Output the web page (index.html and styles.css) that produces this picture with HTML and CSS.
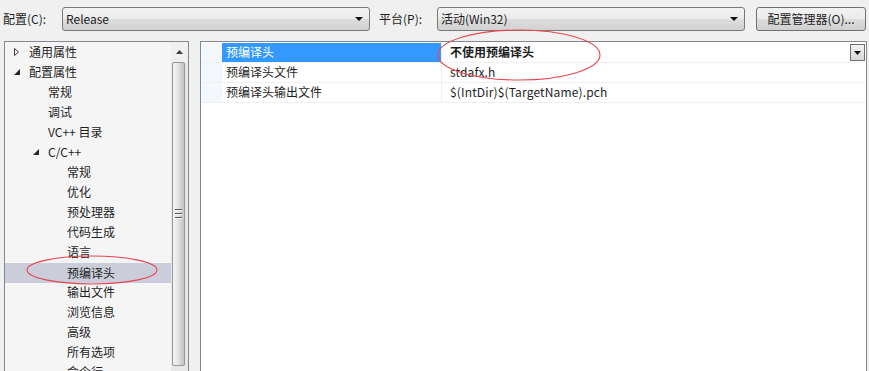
FILE: index.html
```html
<!DOCTYPE html>
<html lang="zh">
<head>
<meta charset="utf-8">
<title>属性页</title>
<link rel="stylesheet" href="styles.css">
</head>
<body>
<div class="page">
  <div class="topbar">
    <span class="label label-cfg">配置(C):</span>
    <div class="combo"><span class="combo-text">Release</span><span class="combo-arrow"></span></div>
    <span class="label label-plat">平台(P):</span>
    <div class="combo"><span class="combo-text">活动(Win32)</span><span class="combo-arrow"></span></div>
    <button class="btn">配置管理器(O)...</button>
  </div>
  <div class="main">
    <div class="tree">
      <div class="tree-list">
        <div class="node l1"><span class="exp"><svg width="19" height="20" viewBox="0 0 19 20"><path d="M4.5 6.5 L8.5 10 L4.5 13.5 Z" fill="none" stroke="#404040" stroke-width="1"/></svg></span>通用属性</div>
        <div class="node l1"><span class="exp"><svg width="19" height="20" viewBox="0 0 19 20"><path d="M10 7 L10 13 L4 13 Z" fill="#262626"/></svg></span>配置属性</div>
        <div class="node l2">常规</div>
        <div class="node l2">调试</div>
        <div class="node l2">VC++ 目录</div>
        <div class="node l2e"><span class="exp"><svg width="19" height="20" viewBox="0 0 19 20"><path d="M10 7 L10 13 L4 13 Z" fill="#262626"/></svg></span>C/C++</div>
        <div class="node l3">常规</div>
        <div class="node l3">优化</div>
        <div class="node l3">预处理器</div>
        <div class="node l3">代码生成</div>
        <div class="node l3">语言</div>
        <div class="node l3 sel">预编译头</div>
        <div class="node l3">输出文件</div>
        <div class="node l3">浏览信息</div>
        <div class="node l3">高级</div>
        <div class="node l3">所有选项</div>
        <div class="node l3">命令行</div>
      </div>
      <div class="vscroll">
        <div class="sb-up"><svg width="7" height="4" viewBox="0 0 7 4"><path d="M0 4 L3.5 0 L7 4 Z" fill="#3c3c3c"/></svg></div>
        <div class="sb-thumb"><span class="grip"></span><span class="grip"></span><span class="grip"></span></div>
      </div>
    </div>
    <div class="grid">
      <div class="row">
        <div class="gut"></div>
        <div class="name selname">预编译头</div>
        <div class="val bold">不使用预编译头<span class="dd"><svg width="7" height="4" viewBox="0 0 7 4"><path d="M0 0 L7 0 L3.5 4 Z" fill="#111"/></svg></span></div>
      </div>
      <div class="row">
        <div class="gut"></div>
        <div class="name">预编译头文件</div>
        <div class="val">stdafx.h</div>
      </div>
      <div class="row">
        <div class="gut"></div>
        <div class="name">预编译头输出文件</div>
        <div class="val">$(IntDir)$(TargetName).pch</div>
      </div>
    </div>
  </div>
  <svg class="marks" width="869" height="371" viewBox="0 0 869 371">
    <ellipse cx="519" cy="55" rx="81" ry="25" fill="none" stroke="#e8454f" stroke-width="1.1"/>
    <ellipse cx="92" cy="270" rx="65" ry="14" fill="none" stroke="#e8454f" stroke-width="1.1"/>
  </svg>
</div>
</body>
</html>
```
FILE: styles.css
```css
html, body {
  margin: 0;
  padding: 0;
}
body {
  background: #f0f0f0;
  font-family: "Noto Sans CJK SC", "Noto Sans", sans-serif;
  font-size: 12px;
  color: #1e1e1e;
  overflow: hidden;
}
.page {
  position: relative;
  width: 869px;
  height: 371px;
  overflow: hidden;
}
.topbar {
  display: flex;
  align-items: center;
  height: 41px;
  box-sizing: border-box;
  padding: 0 3px 3px 3px;
}
.label {
  line-height: 24px;
}
.label-cfg {
  width: 59px;
}
.label-plat {
  width: 58px;
  margin-left: 9px;
}
.combo {
  position: relative;
  width: 308px;
  height: 24px;
  box-sizing: border-box;
  border: 1px solid #7a7a7a;
  border-radius: 3px;
  background: linear-gradient(#f3f3f3 0%, #ebebeb 50%, #dddddd 51%, #d2d2d2 100%);
  display: flex;
  align-items: center;
}
.combo-text {
  padding-left: 3px;
  line-height: 22px;
}
.combo-arrow {
  position: absolute;
  right: 6px;
  top: 9px;
  width: 0;
  height: 0;
  border-left: 4px solid transparent;
  border-right: 4px solid transparent;
  border-top: 4px solid #111;
}
.btn {
  margin-left: 11px;
  width: 110px;
  height: 24px;
  box-sizing: border-box;
  border: 1px solid #707070;
  border-radius: 3px;
  background: linear-gradient(#f2f2f2 0%, #ebebeb 50%, #dddddd 51%, #cfcfcf 100%);
  font-family: inherit;
  font-size: 12px;
  color: #1e1e1e;
  padding: 0;
  line-height: 22px;
}
.main {
  display: flex;
  padding-left: 4px;
  gap: 11px;
  height: 330px;
}
.tree {
  width: 185px;
  height: 340px;
  box-sizing: border-box;
  border: 1px solid #828790;
  background: #f5f5f5;
  display: flex;
}
.tree-list {
  width: 166px;
  padding-top: 0;
}
.node {
  display: flex;
  align-items: center;
  height: 20px;
  line-height: 20px;
  white-space: nowrap;
}
.node.l1 { padding-left: 5px; }
.node.l2 { padding-left: 43px; }
.node.l2e { padding-left: 24px; }
.node.l3 { padding-left: 62px; }
.node.sel {
  background: #cbcdda;
  margin-top: 1px;
  margin-bottom: -1px;
}
.exp {
  width: 19px;
  height: 20px;
  display: flex;
}
.vscroll {
  width: 17px;
  display: flex;
  flex-direction: column;
  background: #e8e8e8;
}
.sb-up {
  height: 20px;
  display: flex;
  align-items: center;
  justify-content: center;
  background: #f0f0f0;
}
.sb-thumb {
  height: 304px;
  margin: 0 0 0 1px;
  width: 13px;
  box-sizing: border-box;
  border: 1px solid #979797;
  border-radius: 2px;
  background: linear-gradient(90deg, #f4f4f4 0%, #e6e6e6 45%, #d2d2d2 70%, #c4c4c4 100%);
  display: flex;
  flex-direction: column;
  align-items: center;
  justify-content: center;
  gap: 2px;
}
.grip {
  width: 7px;
  height: 1px;
  background: #555;
  border-bottom: 1px solid #fafafa;
}
.grid {
  width: 667px;
  height: 340px;
  box-sizing: border-box;
  border: 1px solid #828790;
  background: #ffffff;
  padding-top: 1px;
}
.row {
  display: flex;
  height: 20px;
  box-sizing: border-box;
  border-bottom: 1px solid #f0f0f0;
}
.gut {
  width: 21px;
  background: #f4f7fb;
}
.name {
  width: 219px;
  padding-left: 4px;
  box-sizing: border-box;
  line-height: 18px;
  white-space: nowrap;
}
.selname {
  background: #3399ff;
  color: #ffffff;
}
.val {
  position: relative;
  flex: 1;
  border-left: 1px solid #f0f0f0;
  padding-left: 8px;
  line-height: 18px;
  white-space: nowrap;
  letter-spacing: 0.15px;
}
.bold {
  font-weight: bold;
  letter-spacing: 0;
}
.dd {
  position: absolute;
  right: 1px;
  top: 1px;
  width: 15px;
  height: 17px;
  box-sizing: border-box;
  border: 1px solid #6e6e6e;
  background: linear-gradient(#f2f2f2, #d8d8d8);
  display: flex;
  align-items: center;
  justify-content: center;
}
.marks {
  position: absolute;
  left: 0;
  top: 0;
  pointer-events: none;
}
```
